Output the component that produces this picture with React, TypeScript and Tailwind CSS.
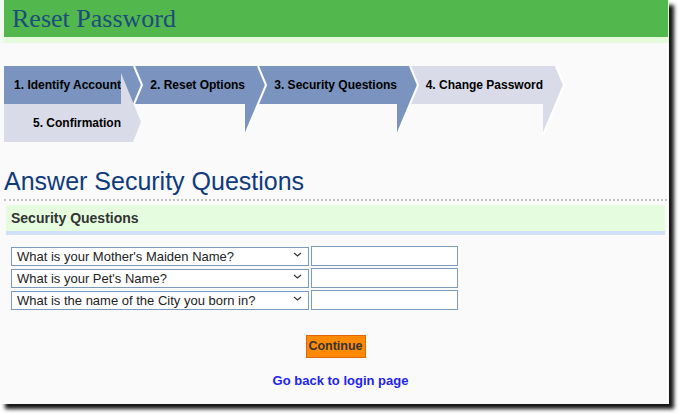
import React from "react";

const BLUE = "#7a93bf";
const LIGHT = "#d9dce8";

const questions = [
  "What is your Mother's Maiden Name?",
  "What is your Pet's Name?",
  "What is the name of the City you born in?",
];

function Tab({
  label,
  width,
  active,
}: {
  label: string;
  width: string;
  active: boolean;
}) {
  const fill = active ? BLUE : LIGHT;
  return (
    <div
      className={`relative flex h-[38px] items-center justify-end ${width} ${active ? "bg-[#7a93bf]" : "bg-[#d9dce8]"}`}
    >
      <span className="whitespace-nowrap text-[12px] font-bold text-black">{label}</span>
      {/* arrow + white notch line */}
      <svg
        className="absolute top-0 left-full z-10 overflow-visible"
        width="22"
        height="70"
        viewBox="0 0 22 70"
      >
        <polygon points="0,0 13,0 21,19 0,69" fill={fill} />
        <polyline points="13,0 21,19 0,69" fill="none" stroke="#ffffff" strokeWidth="2" />
      </svg>
    </div>
  );
}

function Chevron() {
  return (
    <svg
      className="pointer-events-none absolute top-[8px] right-[7px]"
      width="9"
      height="5"
      viewBox="0 0 9 5"
    >
      <path d="M1 1 L4.5 4 L8 1" fill="none" stroke="#333" strokeWidth="1.2" />
    </svg>
  );
}

export default function App() {
  return (
    <div className="min-h-screen bg-white font-['Liberation_Sans',Arial,sans-serif]">
      <div className="h-[404px] w-[669px] bg-[#fafafa] shadow-[5px_5px_4px_rgba(0,0,0,0.92)]">
        {/* header */}
        <div className="border-l-4 border-[#f1faee] bg-[#e5fbdc] pb-[6px]">
          <div className="flex h-[37px] w-[664px] items-center bg-[#52b74c] pl-[8px]">
            <h1 className="font-['Liberation_Serif',serif] text-[26px] leading-none text-[#1c4d7a]">
              Reset Password
            </h1>
          </div>
        </div>

        <div className="pl-[4px] pr-[2px]">
          {/* wizard steps */}
          <div className="mt-[23px] flex">
            <Tab label="1. Identify Account" width="w-[117px]" active />
            <Tab label="2. Reset Options" width="w-[124px]" active />
            <Tab label="3. Security Questions" width="w-[152px]" active />
            <Tab label="4. Change Password" width="w-[146px]" active={false} />
          </div>
          <div className="flex">
            <div className="relative z-20 flex h-[38px] w-[117px] items-center justify-end bg-[#d9dce8]">
              <span className="text-[12px] font-bold text-black">5. Confirmation</span>
              <svg
                className="absolute top-[-31px] left-full"
                width="21"
                height="69"
                viewBox="0 0 21 69"
              >
                <polygon points="0,0 20,49 12,69 0,69" fill={LIGHT} />
              </svg>
            </div>
          </div>

          {/* page title */}
          <h2 className="mt-[25px] border-b-2 border-dotted border-[#c4c4c4] pb-[3px] text-[25px] leading-[29px] text-[#0f3b7d]">
            Answer Security Questions
          </h2>

          <div className="mx-[2px] mt-[4px] flex h-[30px] items-center border-b-4 border-[#cfe0f8] bg-[#e5fcdf] pl-[5px]">
            <span className="text-[14px] font-bold text-[#333]">Security Questions</span>
          </div>

          {/* question rows */}
          <div className="mt-[11px] flex flex-col gap-[2px] pl-[7px]">
            {questions.map((q) => (
              <div key={q} className="flex h-[20px] items-center gap-[2px]">
                <div className="relative">
                  <select
                    defaultValue={q}
                    className="h-[19px] w-[298px] appearance-none border border-[#7c9bbb] bg-white pl-[5px] text-[13px] leading-[17px] text-[#222] outline-none"
                  >
                    {questions.map((o) => (
                      <option key={o} value={o}>
                        {o}
                      </option>
                    ))}
                  </select>
                  <Chevron />
                </div>
                <input
                  type="text"
                  className="h-[20px] w-[147px] border border-[#7c9bbb] bg-white px-1 text-[13px] outline-none"
                />
              </div>
            ))}
          </div>

          <div className="mt-[25px] flex flex-col items-center">
            <button
              type="submit"
              className="h-[23px] w-[60px] border border-[#e4640c] bg-[#fd8a06] text-[12.5px] font-bold text-[#333]"
            >
              Continue
            </button>
            <a href="#" className="mt-[13px] pl-[10px] text-[13px] font-bold text-[#2323f0]">
              Go back to login page
            </a>
          </div>
        </div>
      </div>
    </div>
  );
}
